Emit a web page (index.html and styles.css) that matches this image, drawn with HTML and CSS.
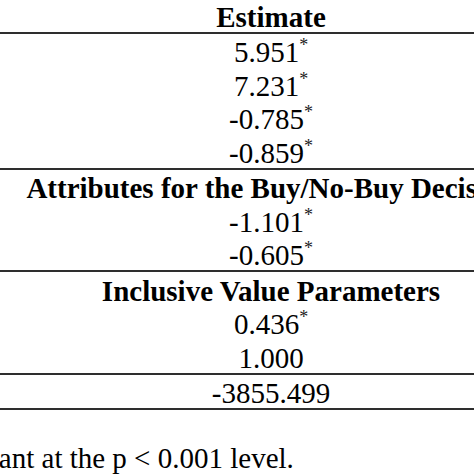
FILE: index.html
```html
<!DOCTYPE html>
<html>
<head>
<meta charset="utf-8">
<link rel="stylesheet" href="styles.css">
</head>
<body>
<div class="page">
  <div class="table">
    <div class="row head">Estimate</div>
    <div class="group">
      <div class="row">5.951<sup class="star">*</sup></div>
      <div class="row">7.231<sup class="star">*</sup></div>
      <div class="row">-0.785<sup class="star">*</sup></div>
      <div class="row">-0.859<sup class="star">*</sup></div>
    </div>
    <div class="group">
      <div class="row head">Attributes for the Buy/No-Buy Decision</div>
      <div class="row">-1.101<sup class="star">*</sup></div>
      <div class="row">-0.605<sup class="star">*</sup></div>
    </div>
    <div class="group">
      <div class="row head">Inclusive Value Parameters</div>
      <div class="row">0.436<sup class="star">*</sup></div>
      <div class="row">1.000</div>
    </div>
    <div class="group last">
      <div class="row">-3855.499</div>
    </div>
  </div>
  <p class="note"><sup class="star">*</sup>Significant at the p &lt; 0.001 level.</p>
</div>
</body>
</html>
```

FILE: styles.css
```css
html, body {
  margin: 0;
  padding: 0;
  background: #ffffff;
}
body {
  width: 474px;
  height: 474px;
  overflow: hidden;
  font-family: "Liberation Serif", "Times New Roman", serif;
  color: #000;
}
.page {
  width: 474px;
  margin-top: -2px;
}
.table {
  width: 474px;
}
.row {
  width: 542px;
  text-align: center;
  font-size: 29px;
  line-height: 29px;
  padding-top: 4.5px;
  white-space: nowrap;
}
.head {
  font-weight: bold;
}
.table > .row.head {
  border-bottom: 2px solid #2e2e2e;
}
.group {
  border-bottom: 2px solid #2e2e2e;
}
.star {
  font-size: 18px;
  line-height: 0;
  vertical-align: 11px;
  color: #222;
}
.note {
  margin: 32px 0 0 -102px;
  font-size: 29px;
  line-height: 33.5px;
  white-space: nowrap;
}
.note .star {
  vertical-align: 11px;
}
```
